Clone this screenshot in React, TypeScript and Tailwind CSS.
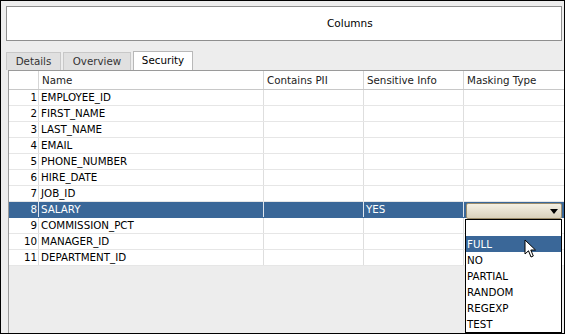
import React from 'react';

const rows = [
  'EMPLOYEE_ID',
  'FIRST_NAME',
  'LAST_NAME',
  'EMAIL',
  'PHONE_NUMBER',
  'HIRE_DATE',
  'JOB_ID',
  'SALARY',
  'COMMISSION_PCT',
  'MANAGER_ID',
  'DEPARTMENT_ID',
];

const options = ['', 'FULL', 'NO', 'PARTIAL', 'RANDOM', 'REGEXP', 'TEST'];

const Cursor: React.FC = () => (
  <svg width="13" height="20" viewBox="0 0 13 20" className="absolute left-[523px] top-[238px]">
    <path d="M1 1 L1 15 L4.5 11.8 L7 18 L9.3 17 L6.8 11 L11.5 11 Z" fill="#fff" stroke="#000" strokeWidth="1" strokeLinejoin="round" />
  </svg>
);

const MaskingDropdown: React.FC = () => (
  <div className="absolute left-[464px] top-[201px] w-[98px]">
    <div className="h-[16px] mx-[1px] mt-[1px] border border-[#9c8d6c] rounded-[2px] bg-gradient-to-b from-[#f4f0e4] to-[#d9d1bc] flex items-center justify-end pr-[3px]">
      <svg width="8" height="5" viewBox="0 0 8 5">
        <path d="M0 0 L8 0 L4 5 Z" fill="#000" />
      </svg>
    </div>
    <div className="border border-black bg-white h-[114px] mr-[1px]">
      {options.map((o, i) => (
        <div
          key={i}
          className={`h-[16px] leading-[16px] pl-[1px] ${o === 'FULL' ? 'bg-[#3a6798] text-white' : 'text-black'}`}
        >
          {o}
        </div>
      ))}
    </div>
  </div>
);

export default function App() {
  return (
    <div className="w-[565px] h-[334px] border border-black bg-[#ededed] relative overflow-hidden font-['DejaVu_Sans',sans-serif] text-[10.3px] text-[#1a1a1a]">
      <div className="ml-[5px] mt-[5px] w-[556px] h-[35px] border border-[#8f8f8f] bg-white flex items-center pl-[320px] text-[10.5px] text-black">
        Columns
      </div>

      <div className="flex mt-[10px] ml-[5px] h-[19px] items-end">
        <div className="h-[18px] w-[55px] border border-b-0 border-[#c8c8c8] bg-[#e0e0e0] flex items-center justify-center text-[#333]">
          Details
        </div>
        <div className="h-[18px] w-[68px] ml-[2px] border border-b-0 border-[#c8c8c8] bg-[#e0e0e0] flex items-center justify-center text-[#333]">
          Overview
        </div>
        <div className="h-[19px] w-[60px] ml-[2px] border border-b-0 border-[#b8b8b8] bg-white flex items-center justify-center text-black">
          Security
        </div>
      </div>

      <div className="ml-[7px] h-[263px] border-l border-t border-[#9a9a9a] bg-[#ededed]">
        <div className="flex h-[19px] bg-white border-b border-[#c8c8c8] text-[#222]">
          <div className="w-[30px] border-r border-[#d6d6d6]" />
          <div className="w-[225px] border-r border-[#d6d6d6] pl-[3px] leading-[18px]">Name</div>
          <div className="w-[100px] border-r border-[#d6d6d6] pl-[3px] leading-[18px]">Contains PII</div>
          <div className="w-[100px] border-r border-[#d6d6d6] pl-[3px] leading-[18px]">Sensitive Info</div>
          <div className="flex-1 pl-[3px] leading-[18px]">Masking Type</div>
        </div>
        {rows.map((name, i) => {
          const sel = name === 'SALARY';
          return (
            <div
              key={name}
              className={`flex h-[16px] leading-[15px] border-b ${sel ? 'bg-[#3a6798] text-white border-[#3a6798]' : 'bg-white text-black border-[#e6e6e6]'}`}
            >
              <div className={`w-[30px] text-right pr-[1px] border-r ${sel ? 'border-[#dfe6ee]' : 'border-[#dedede]'}`}>{i + 1}</div>
              <div className={`w-[225px] pl-[2px] border-r ${sel ? 'border-[#dfe6ee]' : 'border-[#dedede]'}`}>{name}</div>
              <div className={`w-[100px] border-r ${sel ? 'border-[#dfe6ee]' : 'border-[#dedede]'}`} />
              <div className={`w-[100px] pl-[2px] border-r ${sel ? 'border-[#dfe6ee]' : 'border-[#dedede]'}`}>{sel ? 'YES' : ''}</div>
              <div className="flex-1" />
            </div>
          );
        })}
      </div>

      <MaskingDropdown />
      <Cursor />
    </div>
  );
}
